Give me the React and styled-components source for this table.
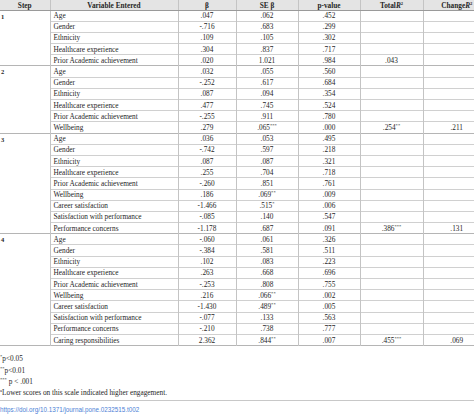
import React from 'react'
import styled, { createGlobalStyle } from 'styled-components'

const Global = createGlobalStyle`
  html, body { margin: 0; padding: 0; background: #fff; }
  body { overflow: hidden; }
`

const Page = styled.div`
  width: 474px;
  height: 417px;
  overflow: hidden;
  font-family: "Liberation Serif", "Times New Roman", serif;
  color: #262626;
`

const Table = styled.table`
  width: 490px;
  table-layout: fixed;
  border-collapse: collapse;
  font-size: 7.3px;
`

const HeadRow = styled.tr`
  height: 10px;
  background: #e4e4e4;
`

const Th = styled.th`
  padding: 0 2px;
  font-weight: bold;
  text-align: center;
  line-height: 8px;
  vertical-align: bottom;
  border-left: 1px solid #c4c4c4;
  border-bottom: 1px solid #9a9a9a;
  white-space: nowrap;
  &:first-child { border-left: none; }
`

const Row = styled.tr`
  height: 11.2px;
  border-top: 1px solid ${p => (p.$first ? '#b5b5b5' : '#d0d0d0')};
  &:last-child { border-bottom: 1px solid #b5b5b5; }
`

const StepCell = styled.td`
  vertical-align: top;
  padding: 2px 1px 0;
  font-size: 6.5px;
  font-weight: bold;
  line-height: 8px;
`

const Td = styled.td`
  padding: 0 3px;
  line-height: 9px;
  white-space: nowrap;
  text-align: ${p => (p.$left ? 'left' : 'center')};
  border-left: 1px solid #c4c4c4;
`

const Sup = styled.sup`
  font-size: 4.6px;
  line-height: 0;
  vertical-align: 2.6px;
`

const Notes = styled.div`
  padding-top: 7px;
  font-size: 7.3px;
  line-height: 11.4px;
`

const Note = styled.div`
  white-space: nowrap;
`

const Rule = styled.div`
  margin-top: 1px;
  border-top: 1px solid #c8c8c8;
`

const Link = styled.div`
  padding-top: 5px;
  font-family: "Liberation Sans", Arial, sans-serif;
  font-size: 6.3px;
  color: #4d7fd6;
  white-space: nowrap;
`

const R2 = ({ label }) => (
  <>
    {label}
    <i>R</i>
    <Sup>2</Sup>
  </>
)

const Val = ({ v }) => {
  const m = v.match(/^([^*]*)(\**)$/)
  return (
    <>
      {m[1]}
      {m[2] && <Sup>{m[2]}</Sup>}
    </>
  )
}

const steps = [
  {
    rows: [
      ['Age', '.047', '.062', '.452'],
      ['Gender', '-.716', '.683', '.299'],
      ['Ethnicity', '.109', '.105', '.302'],
      ['Healthcare experience', '.304', '.837', '.717'],
      ['Prior Academic achievement', '.020', '1.021', '.984', '.043', ''],
    ],
  },
  {
    rows: [
      ['Age', '.032', '.055', '.560'],
      ['Gender', '-.252', '.617', '.684'],
      ['Ethnicity', '.087', '.094', '.354'],
      ['Healthcare experience', '.477', '.745', '.524'],
      ['Prior Academic achievement', '-.255', '.911', '.780'],
      ['Wellbeing', '.279', '.065***', '.000', '.254**', '.211'],
    ],
  },
  {
    rows: [
      ['Age', '.036', '.053', '.495'],
      ['Gender', '-.742', '.597', '.218'],
      ['Ethnicity', '.087', '.087', '.321'],
      ['Healthcare experience', '.255', '.704', '.718'],
      ['Prior Academic achievement', '-.260', '.851', '.761'],
      ['Wellbeing', '.186', '.069**', '.009'],
      ['Career satisfaction', '-1.466', '.515*', '.006'],
      ['Satisfaction with performance', '-.085', '.140', '.547'],
      ['Performance concerns', '-1.178', '.687', '.091', '.386***', '.131'],
    ],
  },
  {
    rows: [
      ['Age', '-.060', '.061', '.326'],
      ['Gender', '-.384', '.581', '.511'],
      ['Ethnicity', '.102', '.083', '.223'],
      ['Healthcare experience', '.263', '.668', '.696'],
      ['Prior Academic achievement', '-.253', '.808', '.755'],
      ['Wellbeing', '.216', '.066**', '.002'],
      ['Career satisfaction', '-1.430', '.489**', '.005'],
      ['Satisfaction with performance', '-.077', '.133', '.563'],
      ['Performance concerns', '-.210', '.738', '.777'],
      ['Caring responsibilities', '2.362', '.844**', '.007', '.455***', '.069'],
    ],
  },
]

const widths = [50, 128, 58, 62, 62, 63, 67]

export default function App() {
  return (
    <Page>
      <Global />
      <Table>
        <colgroup>
          {widths.map((w, i) => (
            <col key={i} style={{ width: w }} />
          ))}
        </colgroup>
        <thead>
          <HeadRow>
            <Th>Step</Th>
            <Th>Variable Entered</Th>
            <Th>β</Th>
            <Th>SE β</Th>
            <Th>p-value</Th>
            <Th><R2 label="Total" /></Th>
            <Th><R2 label="Change" /></Th>
          </HeadRow>
        </thead>
        <tbody>
          {steps.map((s, si) =>
            s.rows.map((r, ri) => (
              <Row key={`${si}-${ri}`} $first={ri === 0}>
                {ri === 0 && <StepCell rowSpan={s.rows.length}>{si + 1}</StepCell>}
                <Td $left>{r[0]}</Td>
                <Td><Val v={r[1]} /></Td>
                <Td><Val v={r[2]} /></Td>
                <Td><Val v={r[3]} /></Td>
                <Td><Val v={r[4] || ''} /></Td>
                <Td><Val v={r[5] || ''} /></Td>
              </Row>
            ))
          )}
        </tbody>
      </Table>
      <Notes>
        <Note><Sup>*</Sup>p&lt;0.05</Note>
        <Note><Sup>**</Sup>p&lt;0.01</Note>
        <Note><Sup>***</Sup> p &lt; .001</Note>
        <Note><Sup>a</Sup>Lower scores on this scale indicated higher engagement.</Note>
      </Notes>
      <Rule />
      <Link>https://doi.org/10.1371/journal.pone.0232515.t002</Link>
    </Page>
  )
}
